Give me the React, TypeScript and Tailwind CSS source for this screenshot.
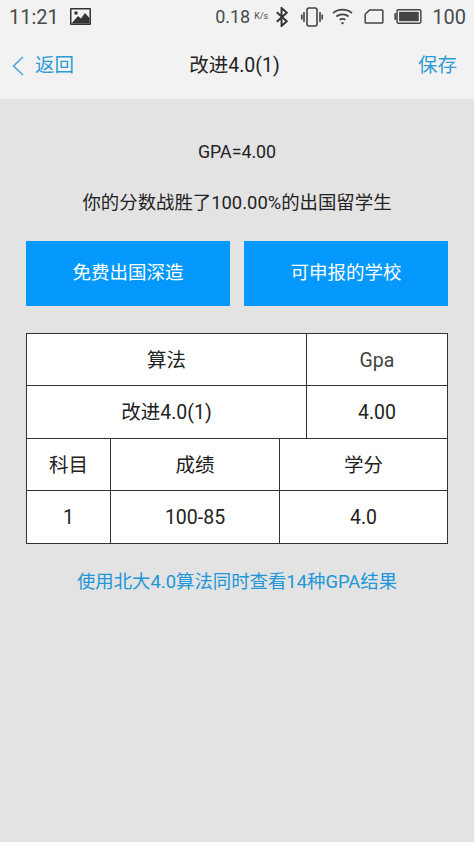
const FONT = "font-['Roboto','Noto_Sans_CJK_SC',sans-serif]";

function StatusBar() {
  return (
    <div className="flex h-[33px] items-center pl-[9px] pr-[8px] text-[#4a4a4a]">
      <span className="text-[20px] leading-none">11:21</span>
      <svg className="ml-[11px]" width="21" height="17" viewBox="0 0 21 17">
        <rect width="21" height="17" rx="1" fill="#333" />
        <rect x="1.5" y="1.5" width="18" height="14" fill="#f2f2f2" />
        <path d="M1.5 15.5 L8 8 L11 10.5 L15 5 L19.5 10 V15.5 Z" fill="#333" />
        <circle cx="6" cy="5" r="1.8" fill="#333" />
      </svg>
      <span className="ml-auto text-[18px] leading-none">0.18</span>
      <span className="ml-[4px] text-[9px] leading-none">K/s</span>
      <svg className="ml-[7px]" width="14" height="20" viewBox="0 0 14 21" fill="none" stroke="#333" strokeWidth="2">
        <path d="M1.5 5.5 L12 15 L6.5 20 V1 L12 6 L1.5 15.5" />
      </svg>
      <svg className="ml-[12px]" width="22" height="20" viewBox="0 0 22 20" fill="none" stroke="#444" strokeWidth="1.6">
        <rect x="6" y="1" width="10" height="18" rx="2" />
        <path d="M3 5 V15 M19 5 V15 M0.8 7.5 V12.5 M21.2 7.5 V12.5" />
      </svg>
      <svg className="ml-[9px]" width="21" height="17" viewBox="0 0 22 18" fill="none" stroke="#444" strokeWidth="1.8">
        <path d="M1 5.5 C6.5 0.5 15.5 0.5 21 5.5" />
        <path d="M4.5 9 C8 6 14 6 17.5 9" />
        <path d="M8 12.5 C9.5 11.3 12.5 11.3 14 12.5" />
        <circle cx="11" cy="16" r="1.3" fill="#444" stroke="none" />
      </svg>
      <svg className="ml-[11px]" width="20" height="15" viewBox="0 0 22 17" fill="none" stroke="#444" strokeWidth="1.7">
        <path d="M6 1 H20 a1 1 0 0 1 1 1 V15 a1 1 0 0 1 -1 1 H2 a1 1 0 0 1 -1 -1 V6 Z" />
      </svg>
      <svg className="ml-[10px]" width="28" height="15" viewBox="0 0 29 16">
        <rect x="0" y="4.5" width="2" height="7" fill="#444" />
        <rect x="2.8" y="0.8" width="25.4" height="14.4" rx="1.5" fill="none" stroke="#444" strokeWidth="1.6" />
        <rect x="5" y="3" width="21" height="10" fill="#444" />
      </svg>
      <span className="ml-[10px] text-[20px] leading-none">100</span>
    </div>
  );
}

function Cell({ className = "", children }: { className?: string; children: React.ReactNode }) {
  return <div className={`flex items-center justify-center pt-[2px] ${className}`}>{children}</div>;
}

export default function App() {
  return (
    <div className={`flex h-[842px] w-[474px] flex-col bg-[#e3e3e3] ${FONT}`}>
      <div className="h-[99px] bg-[#f2f2f2]">
        <StatusBar />
        <div className="flex h-[66px] items-center px-[12px] text-[19.5px]">
          <div className="flex flex-1 items-center text-[#2f9bd6]">
            <svg width="12" height="20" viewBox="0 0 12 20" fill="none" stroke="#4aa5dc" strokeWidth="1.6">
              <path d="M11 1 L1.5 10 L11 19" />
            </svg>
            <span className="ml-[11px]">返回</span>
          </div>
          <span className="text-[19.5px] text-[#222]">改进4.0(1)</span>
          <div className="flex flex-1 justify-end pr-[5px] text-[#2f9bd6]">保存</div>
        </div>
      </div>

      <div className="flex flex-col items-center px-[26px] text-[#222]">
        <p className="mt-[42px] text-[17.8px] leading-[22px]">GPA=4.00</p>
        <p className="mt-[27px] text-[18.4px] leading-[26px]">你的分数战胜了100.00%的出国留学生</p>

        <div className="mt-[25px] flex w-full justify-between">
          <button className="flex h-[65px] w-[204px] items-center justify-center bg-[#0699fd] text-[18.5px] text-white">
            免费出国深造
          </button>
          <button className="flex h-[65px] w-[204px] items-center justify-center bg-[#0699fd] text-[18.5px] text-white">
            可申报的学校
          </button>
        </div>

        <div className="mt-[27px] w-full border border-[#333] bg-white text-[19.5px] text-[#222]">
          <div className="flex h-[52px] border-b border-[#333]">
            <Cell className="w-[280px] border-r border-[#333]">算法</Cell>
            <Cell className="flex-1 text-[#444]">Gpa</Cell>
          </div>
          <div className="flex h-[53px] border-b border-[#333]">
            <Cell className="w-[280px] border-r border-[#333]">改进4.0(1)</Cell>
            <Cell className="flex-1">4.00</Cell>
          </div>
          <div className="flex h-[52px] border-b border-[#333]">
            <Cell className="w-[84px] border-r border-[#333]">科目</Cell>
            <Cell className="w-[169px] border-r border-[#333]">成绩</Cell>
            <Cell className="flex-1">学分</Cell>
          </div>
          <div className="flex h-[52px]">
            <Cell className="w-[84px] border-r border-[#333]">1</Cell>
            <Cell className="w-[169px] border-r border-[#333]">100-85</Cell>
            <Cell className="flex-1">4.0</Cell>
          </div>
        </div>

        <p className="mt-[25px] text-[18.4px] leading-[26px] text-[#2196d8]">使用北大4.0算法同时查看14种GPA结果</p>
      </div>
    </div>
  );
}
